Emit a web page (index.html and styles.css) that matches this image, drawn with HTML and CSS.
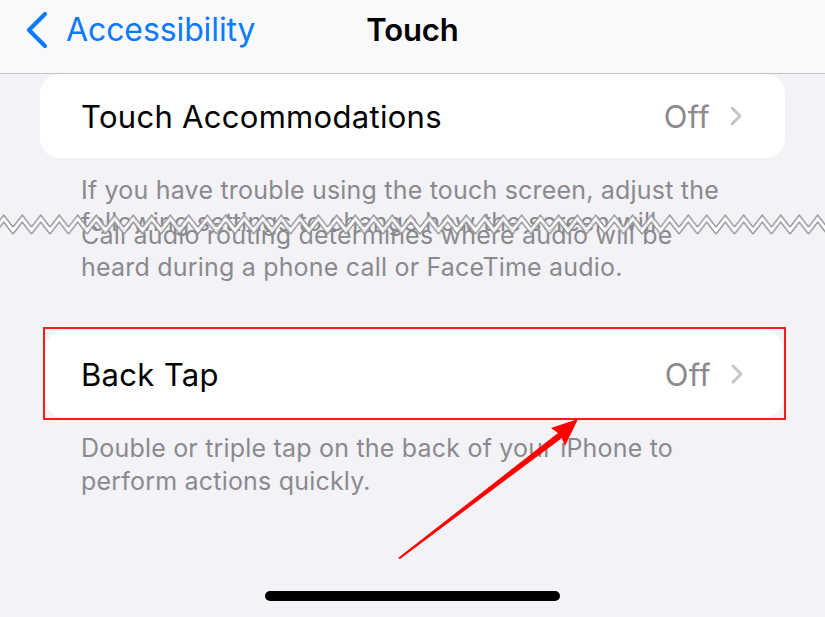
FILE: index.html
```html
<!DOCTYPE html>
<html lang="en">
<head>
    <meta charset="UTF-8">
    <meta name="viewport" content="width=device-width, initial-scale=1.0">
    <title>Touch</title>
    <link rel="stylesheet" href="styles.css">
</head>
<body>
    <div class="screen">
        <header class="navbar">
            <a class="back-link" href="#">
                <svg class="back-chevron" width="26" height="40" viewBox="0 0 26 40">
                    <path d="M20 4 L4 20 L20 36" fill="none" stroke="#0a7aff" stroke-width="4.2" stroke-linecap="round" stroke-linejoin="round"/>
                </svg>
                <span>Accessibility</span>
            </a>
            <h1 class="nav-title">Touch</h1>
            <div></div>
        </header>

        <main class="content">
            <div class="card">
                <span class="card-label">Touch Accommodations</span>
                <span class="card-value">Off</span>
                <svg class="card-chevron" width="14" height="22" viewBox="0 0 14 22">
                    <path d="M3 3 L11 11 L3 19" fill="none" stroke="#c4c4c7" stroke-width="3" stroke-linecap="round" stroke-linejoin="round"/>
                </svg>
            </div>

            <div class="torn-footer">
                <p class="footer-text">If you have trouble using the touch screen, adjust the following settings to change how the screen will</p>
                <p class="footer-text footer-joined">Call audio routing determines where audio will be heard during a phone call or FaceTime audio.</p>
            </div>

            <div class="card card-highlighted">
                <span class="card-label">Back Tap</span>
                <span class="card-value">Off</span>
                <svg class="card-chevron" width="14" height="22" viewBox="0 0 14 22">
                    <path d="M3 3 L11 11 L3 19" fill="none" stroke="#c4c4c7" stroke-width="3" stroke-linecap="round" stroke-linejoin="round"/>
                </svg>
                <div class="highlight-box"></div>
            </div>

            <p class="footer-text footer-second">Double or triple tap on the back of your iPhone to perform actions quickly.</p>
        </main>

        <!-- torn edge between the two screenshots -->
        <svg class="tear" width="825" height="30" viewBox="0 0 825 30">
            <defs>
                <pattern id="zigzag" x="-5.5" y="0" width="18.5" height="30" patternUnits="userSpaceOnUse">
                    <polygon points="0,15 9.25,3 18.5,15 18.5,22 9.25,10 0,22" fill="#ffffff" fill-opacity="0.82"/>
                    <polyline points="0,15 9.25,3 18.5,15" fill="none" stroke="#8e8e93" stroke-width="1.3"/>
                    <polyline points="0,22 9.25,10 18.5,22" fill="none" stroke="#8e8e93" stroke-width="1.3"/>
                </pattern>
            </defs>
            <rect x="0" y="0" width="825" height="30" fill="url(#zigzag)"/>
        </svg>

        <!-- annotation arrow -->
        <svg class="arrow" width="825" height="617" viewBox="0 0 825 617">
            <polygon points="398,558 558,433 551,428 578,419 565,446 562,438 400,559" fill="#ff0000"/>
        </svg>

        <div class="home-indicator"></div>
    </div>
</body>
</html>
```

FILE: styles.css
```css
body {
    margin: 0;
    background-color: #f2f2f7;
    font-family: Inter, "Noto Sans", sans-serif;
}

.screen {
    position: relative;
    width: 825px;
    height: 617px;
    overflow: hidden;
}

.navbar {
    height: 74px;
    display: grid;
    grid-template-columns: 1fr auto 1fr;
    align-items: center;
    padding-bottom: 14px;
    background-color: #f9f9fb;
    border-bottom: 1px solid #c4c4c7;
    box-sizing: border-box;
}

.back-link {
    display: flex;
    align-items: center;
    gap: 15px;
    padding-left: 25px;
    color: #0a7aff;
    text-decoration: none;
    font-size: 32px;
    letter-spacing: -0.1px;
}

.back-chevron {
    display: block;
}

.nav-title {
    margin: 0;
    font-size: 31px;
    font-weight: 600;
    color: #000;
    letter-spacing: -0.1px;
}

.content {
    padding: 0 40px;
}

.card {
    position: relative;
    height: 84px;
    display: flex;
    align-items: center;
    background-color: #fff;
    border-radius: 20px;
    padding: 0 42px 0 41px;
}

.card-label {
    flex: 1;
    font-size: 31px;
    color: #000;
    letter-spacing: 0.3px;
}

.card-value {
    font-size: 31px;
    color: #8a8a8e;
    margin-right: 19px;
    letter-spacing: 0.3px;
}

.card-chevron {
    display: block;
}

.torn-footer {
    margin-top: 16px;
}

.footer-text {
    margin: 0;
    padding-left: 41px;
    padding-right: 60px;
    font-size: 25px;
    line-height: 32px;
    color: #8a8a8e;
    letter-spacing: 0.2px;
}

.footer-joined {
    margin-top: -19px;
}

.card-highlighted {
    height: 88px;
    margin: 47px 2px 0 5px;
    padding-left: 36px;
    padding-right: 39px;
}

.highlight-box {
    position: absolute;
    top: -3px;
    left: -2px;
    right: -3px;
    bottom: -2px;
    border: 2px solid #ff1a1a;
}

.footer-second {
    margin-top: 14px;
    line-height: 33px;
}

.tear {
    position: absolute;
    left: 0;
    top: 212px;
}

.arrow {
    position: absolute;
    left: 0;
    top: 0;
}

.home-indicator {
    position: absolute;
    left: 265px;
    bottom: 16px;
    width: 295px;
    height: 10px;
    border-radius: 5px;
    background-color: #000;
}
```
